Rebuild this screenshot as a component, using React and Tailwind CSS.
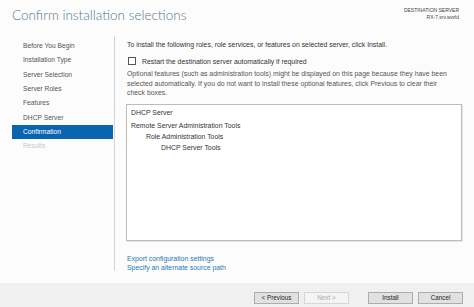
import React from 'react'

const steps = [
  'Before You Begin',
  'Installation Type',
  'Server Selection',
  'Server Roles',
  'Features',
  'DHCP Server',
  'Confirmation',
  'Results'
]

const CURRENT = 'Confirmation'
const DISABLED = 'Results'

function WizardButton({ children, disabled }) {
  return (
    <button
      type="button"
      disabled={disabled}
      className={`h-[12px] w-[45px] border text-[6.3px] leading-none ${
        disabled
          ? 'border-[#d6d6d6] bg-[#f4f4f4] text-[#a8a8a8]'
          : 'border-[#adadad] bg-[#e1e1e1] text-[#222]'
      }`}
    >
      {children}
    </button>
  )
}

export default function App() {
  return (
    <div
      className="flex h-[307px] w-[474px] flex-col overflow-hidden bg-[#fcfcfc] text-[#333]"
      style={{ fontFamily: '"Liberation Sans", Arial, sans-serif' }}
    >
      {/* Header */}
      <div className="flex h-[36px] items-start justify-between pl-[12px] pr-[15px]">
        <h1
          className="mt-[5px] text-[13.5px] font-light leading-[20px] text-[#56788f]"
          style={{ fontFamily: 'Lato, sans-serif' }}
        >
          Confirm installation selections
        </h1>
        <div className="mt-[7px] text-right text-[5px] leading-[6.5px] text-[#444]">
          <div>DESTINATION SERVER</div>
          <div>RX-7.srv.world</div>
        </div>
      </div>

      {/* Body */}
      <div className="flex flex-1">
        {/* Step list */}
        <div className="mb-[12px] w-[115px] border-r border-[#d4d4d4] pl-[12px] pr-[1px] pt-[3px]">
          {steps.map((s) => (
            <div
              key={s}
              className={`flex h-[14.3px] items-center pl-[11px] text-[6.7px] ${
                s === CURRENT
                  ? 'bg-[#0a64b0] text-white'
                  : s === DISABLED
                  ? 'text-[#c8c8c8]'
                  : 'text-[#555]'
              }`}
            >
              {s}
            </div>
          ))}
        </div>

        {/* Content */}
        <div className="flex-1 pl-[12px] pr-[12px] pt-[4px] text-[6.9px] leading-[9.5px] text-[#333]">
          <p>To install the following roles, role services, or features on selected server, click Install.</p>

          <label className="mt-[7px] flex items-center">
            <span className="ml-[1px] h-[8px] w-[8px] border border-[#555] bg-white" />
            <span className="ml-[6px]">Restart the destination server automatically if required</span>
          </label>

          <p className="mt-[3px] whitespace-nowrap text-[#555]">
            Optional features (such as administration tools) might be displayed on this page because they have been
            <br />
            selected automatically. If you do not want to install these optional features, click Previous to clear their
            <br />
            check boxes.
          </p>

          <div className="ml-[-1px] mt-[6px] h-[137px] w-[336px] border border-[#bcbcbc] bg-white pl-[4px] pt-[2px] leading-[11px] shadow-[1px_1px_0_#e6e6e6]">
            <div>DHCP Server</div>
            <div className="mt-[2px]">Remote Server Administration Tools</div>
            <div className="pl-[15px]">Role Administration Tools</div>
            <div className="pl-[30px]">DHCP Server Tools</div>
          </div>

          <div className="mt-[13px] leading-[9px] text-[#2a78b0]">
            <div>Export configuration settings</div>
            <div>Specify an alternate source path</div>
          </div>
        </div>
      </div>

      {/* Footer */}
      <div className="flex h-[24px] items-start bg-[#f0f0f0] pr-[11px] pt-[9px]">
        <div className="ml-auto flex gap-[5px]">
          <WizardButton>&lt; Previous</WizardButton>
          <WizardButton disabled>Next &gt;</WizardButton>
        </div>
        <div className="ml-[19px] flex gap-[5px]">
          <WizardButton>Install</WizardButton>
          <WizardButton>Cancel</WizardButton>
        </div>
      </div>
    </div>
  )
}
